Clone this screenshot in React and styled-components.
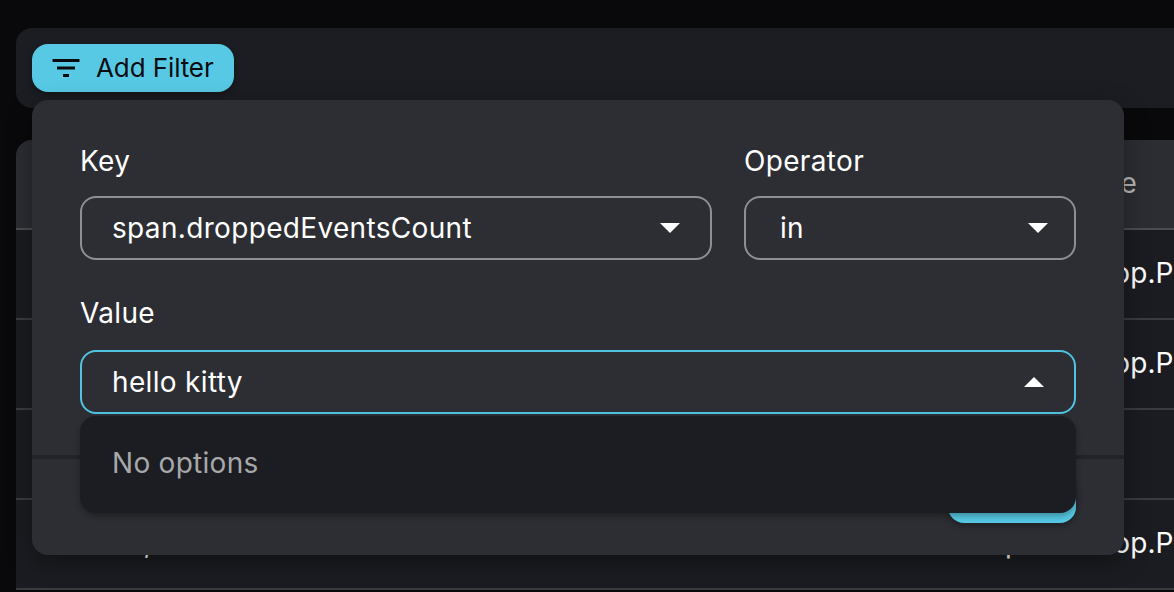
import React from 'react'
import styled, { createGlobalStyle } from 'styled-components'

const GlobalStyle = createGlobalStyle`
	html, body {
		margin: 0;
		height: 100%;
		overflow: hidden;
		background-color: #09090b;
		font-family: Inter, "Noto Sans", sans-serif;
	}
`;

const rows = [
	{ time: 'Nov 20, 2023', type: 'plate.Shop.Product' },
	{ time: 'Nov 20, 2023', type: 'plate.Shop.Product' },
	{ time: 'Nov 20, 2023', type: '' },
	{ time: 'Nov 20, 2023', type: 'plate.Shop.Product' },
]

function FilterIcon() {
	return (
		<svg width="36" height="36" viewBox="0 0 24 24" fill="#0b0c10">
			<path d="M10 18h4v-2h-4v2zM3 6v2h18V6H3zm3 7h12v-2H6v2z" />
		</svg>
	)
}

function Caret({ up }) {
	return (
		<svg width="20" height="10" viewBox="7 10 10 5" fill="#fff">
			<path d={up ? 'M7 15l5-5 5 5z' : 'M7 10l5 5 5-5z'} />
		</svg>
	)
}

function App() {
	return (
		<>
			<GlobalStyle />
			<Page>
				<FilterBar>
					<AddFilter>
						<FilterIcon />
						<span>Add Filter</span>
					</AddFilter>
					<Popover>
						<Form>
							<Field>
								<Label>Key</Label>
								<Select $inset={30} $caretRight={30}>
									<span>span.droppedEventsCount</span>
									<Caret />
								</Select>
							</Field>
							<Field>
								<Label>Operator</Label>
								<Select $inset={34} $caretRight={26}>
									<span>in</span>
									<Caret />
								</Select>
							</Field>
							<Field $wide>
								<Label>Value</Label>
								<Select $inset={30} $caretRight={30} $open>
									<span>hello kitty</span>
									<Caret up />
								</Select>
								<Menu>No options</Menu>
							</Field>
						</Form>
						<Divider />
						<Footer>
							<Apply>Apply</Apply>
						</Footer>
					</Popover>
				</FilterBar>
				<Table>
					<Row $header>
						<Cell>Timestamp</Cell>
						<Cell>Sequence</Cell>
					</Row>
					{rows.map((row, i) => (
						<Row key={i}>
							<Cell>{row.time}</Cell>
							<Cell>{row.type}</Cell>
						</Row>
					))}
				</Table>
			</Page>
		</>
	)
}

const Page = styled.div`
	height: 592px;
	padding: 28px 0 0 16px;
	box-sizing: border-box;
	overflow: hidden;
	display: flex;
	flex-direction: column;
	gap: 32px;
`;
const FilterBar = styled.div`
	position: relative;
	height: 80px;
	flex-shrink: 0;
	padding: 16px;
	box-sizing: border-box;
	background-color: #1c1d22;
	border-radius: 16px 0 0 16px;
`;
const AddFilter = styled.button`
	display: flex;
	align-items: center;
	gap: 12px;
	height: 48px;
	width: 202px;
	padding: 0 0 2px 16px;
	box-sizing: border-box;
	border: none;
	border-radius: 16px;
	background-color: #57c9e4;
	box-shadow: 0 3px 6px rgba(0, 0, 0, 0.3);
	color: #0b0c10;
	font-family: inherit;
	font-size: 26px;
	font-weight: 400;
	letter-spacing: -0.1px;
	svg {
		margin-bottom: -2px;
	}
`;
const Popover = styled.div`
	position: absolute;
	top: 72px;
	left: 16px;
	z-index: 2;
	width: 1092px;
	height: 455px;
	background-color: #2d2e33;
	border-radius: 16px;
	box-shadow: 0 8px 24px rgba(0, 0, 0, 0.35);
`;
const Form = styled.div`
	display: grid;
	grid-template-columns: 632px 332px;
	align-content: start;
	column-gap: 32px;
	row-gap: 40px;
	padding: 48px 48px 0;
	height: 355px;
	box-sizing: border-box;
`;
const Field = styled.div`
	position: relative;
	grid-column: ${(p) => (p.$wide ? '1 / -1' : 'auto')};
	display: flex;
	flex-direction: column;
	gap: ${(p) => (p.$wide ? '23.5px' : '22px')};
`;
const Label = styled.label`
	color: #fff;
	font-size: 28px;
	line-height: 26px;
	letter-spacing: 0.33px;
`;
const Select = styled.div`
	display: flex;
	align-items: center;
	justify-content: space-between;
	height: 64px;
	padding: 0 ${(p) => p.$caretRight}px 0 ${(p) => p.$inset}px;
	box-sizing: border-box;
	border: 2px solid ${(p) => (p.$open ? '#4fc3df' : '#8e8f93')};
	border-radius: 16px;
	color: #fff;
	font-size: 28px;
	letter-spacing: 0.33px;
`;
const Menu = styled.div`
	position: absolute;
	top: 116px;
	left: 0;
	right: 0;
	z-index: 1;
	height: 97px;
	display: flex;
	align-items: center;
	padding: 0 0 3px 32px;
	box-sizing: border-box;
	background-color: #1c1d22;
	border-radius: 16px;
	box-shadow: 0 3px 6px rgba(0, 0, 0, 0.3);
	color: #a7a8aa;
	font-size: 28px;
	letter-spacing: 0.28px;
`;
const Divider = styled.div`
	height: 4px;
	background-color: #232327;
`;
const Footer = styled.div`
	display: flex;
	justify-content: flex-end;
	padding: 16px 48px 32px;
`;
const Apply = styled.button`
	width: 128px;
	height: 48px;
	padding: 0 0 3px;
	border: none;
	border-radius: 16px;
	background-color: #57c9e4;
	box-shadow: 0 3px 6px rgba(0, 0, 0, 0.3);
	color: #0b0c10;
	font-family: inherit;
	font-size: 26px;
	font-weight: 400;
`;
const Table = styled.div`
	display: flex;
	flex-direction: column;
	border-radius: 16px 0 0 0;
	overflow: hidden;
	background-color: #1b1c21;
`;
const Row = styled.div`
	display: grid;
	grid-template-columns: 989px 1fr;
	flex-shrink: 0;
	align-items: center;
	height: 90px;
	padding-bottom: 2px;
	box-sizing: border-box;
	border-bottom: 2px solid ${(p) => (p.$header ? '#4c4c50' : '#3a3b40')};
	background-color: ${(p) => (p.$header ? '#2c2d33' : '#1b1c21')};
	color: ${(p) => (p.$header ? '#b4b5b7' : '#fff')};
	font-size: 28px;
	letter-spacing: ${(p) => (p.$header ? '-0.2px' : '0.1px')};
`;
const Cell = styled.div`
	padding-left: 32px;
	white-space: nowrap;
	overflow: hidden;
	&:last-child {
		padding-left: 0;
		overflow: visible;
	}
`;

export default App
